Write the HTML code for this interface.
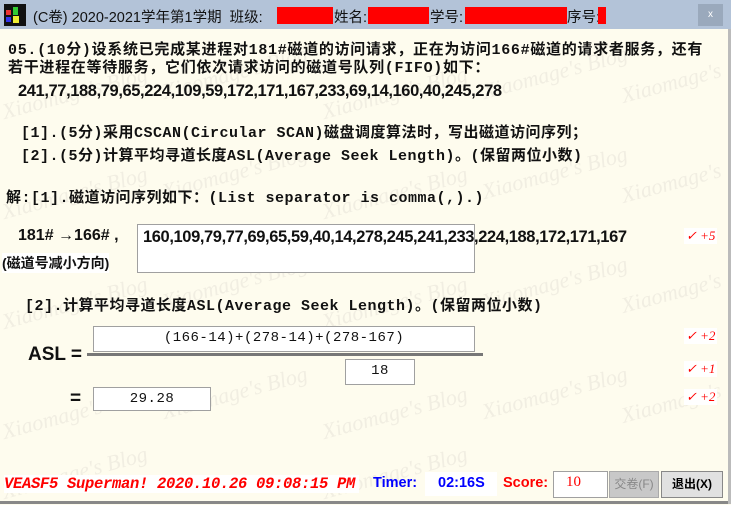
<!DOCTYPE html>
<html><head><meta charset="utf-8"><style>
*{margin:0;padding:0;box-sizing:border-box}
body{width:731px;height:504px;background:#fefcee;position:relative;overflow:hidden;font-family:"Liberation Mono","Noto Sans CJK SC",monospace}
.a{position:absolute;white-space:nowrap}
.t{font-size:15px;font-weight:bold;letter-spacing:0.5px;color:#111}
.ar{font-family:"Liberation Sans","Noto Sans CJK SC",sans-serif;font-weight:bold;color:#111}
.box{position:absolute;background:#fff;border:1px solid #a0a0a0}
.wm{position:absolute;font-family:"Liberation Serif",serif;font-style:italic;font-size:22px;color:#f1eee2;transform:rotate(-15deg);white-space:nowrap}
.mk{position:absolute;color:#f00;font-style:italic;font-size:13px;font-family:"Liberation Serif",serif;background:#fff;padding:0 2px}
.red{position:absolute;background:#f00;height:17px;top:7px}
.tt{position:absolute;top:6px;font-family:'Liberation Sans','Noto Sans CJK SC',sans-serif;font-size:14.5px;color:#111;white-space:nowrap}
</style></head><body>
<div class="wm" style="left:0;top:80px">Xiaomage's Blog</div>
<div class="wm" style="left:160px;top:60px">Xiaomage's Blog</div>
<div class="wm" style="left:320px;top:80px">Xiaomage's Blog</div>
<div class="wm" style="left:480px;top:60px">Xiaomage's Blog</div>
<div class="wm" style="left:620px;top:70px">Xiaomage's</div>
<div class="wm" style="left:0;top:180px">Xiaomage's Blog</div>
<div class="wm" style="left:160px;top:160px">Xiaomage's Blog</div>
<div class="wm" style="left:320px;top:180px">Xiaomage's Blog</div>
<div class="wm" style="left:480px;top:160px">Xiaomage's Blog</div>
<div class="wm" style="left:620px;top:170px">Xiaomage's</div>
<div class="wm" style="left:0;top:290px">Xiaomage's Blog</div>
<div class="wm" style="left:160px;top:270px">Xiaomage's Blog</div>
<div class="wm" style="left:320px;top:290px">Xiaomage's Blog</div>
<div class="wm" style="left:480px;top:270px">Xiaomage's Blog</div>
<div class="wm" style="left:620px;top:280px">Xiaomage's</div>
<div class="wm" style="left:0;top:400px">Xiaomage's Blog</div>
<div class="wm" style="left:160px;top:380px">Xiaomage's Blog</div>
<div class="wm" style="left:320px;top:400px">Xiaomage's Blog</div>
<div class="wm" style="left:480px;top:380px">Xiaomage's Blog</div>
<div class="wm" style="left:620px;top:390px">Xiaomage's</div>
<div class="wm" style="left:0;top:460px">Xiaomage's Blog</div>
<div class="wm" style="left:320px;top:460px">Xiaomage's Blog</div>

<div class="a" style="left:0;top:0;width:731px;height:29px;background:#b3c3d8"></div>
<div class="a" style="left:4px;top:4px;width:22px;height:22px;background:#111"></div>
<div class="a" style="left:6px;top:10px;width:5px;height:5px;background:#e33"></div>
<div class="a" style="left:6px;top:17px;width:5px;height:5px;background:#33e"></div>
<div class="a" style="left:13px;top:7px;width:5px;height:8px;background:#3c3"></div>
<div class="a" style="left:13px;top:16px;width:6px;height:7px;background:#ee3"></div>
<div class="tt" style="left:33px">(C卷) 2020-2021学年第1学期&nbsp;&nbsp;班级:</div>
<div class="tt" style="left:334px">姓名:</div>
<div class="tt" style="left:430px">学号:</div>
<div class="tt" style="left:567px">序号:</div>
<div class="red" style="left:277px;width:56px"></div>
<div class="red" style="left:368px;width:61px"></div>
<div class="red" style="left:465px;width:102px"></div>
<div class="red" style="left:598px;width:8px"></div>
<div class="a" style="left:698px;top:4px;width:25px;height:22px;background:#9aa9bc;color:#fff;font-size:10px;text-align:center;line-height:22px;font-family:'Liberation Sans'">x</div>

<div class="a t" style="left:8px;top:38px;letter-spacing:0.7px">05.(10分)设系统已完成某进程对181#磁道的访问请求，正在为访问166#磁道的请求者服务，还有</div>
<div class="a t" style="left:8px;top:56px;letter-spacing:0.7px">若干进程在等待服务，它们依次请求访问的磁道号队列(FIFO)如下：</div>
<div class="a ar" style="left:18px;top:82px;font-size:16.5px;letter-spacing:-0.4px">241,77,188,79,65,224,109,59,172,171,167,233,69,14,160,40,245,278</div>
<div class="a t" style="left:21px;top:121px">[1].(5分)采用CSCAN(Circular SCAN)磁盘调度算法时，写出磁道访问序列；</div>
<div class="a t" style="left:21px;top:144px">[2].(5分)计算平均寻道长度ASL(Average Seek Length)。(保留两位小数)</div>
<div class="a t" style="left:6px;top:186px">解:[1].磁道访问序列如下：(List separator is comma(,).)</div>

<div class="a ar" style="left:18px;top:227px;font-size:16px">181# →166# ,</div>
<div class="box" style="left:137px;top:224px;width:338px;height:49px"></div>
<div class="a ar" style="left:143px;top:228px;font-size:16.5px;letter-spacing:-0.4px">160,109,79,77,69,65,59,40,14,278,245,241,233,224,188,172,171,167</div>
<div class="a" style="left:2px;top:253px;background:#fff;font-size:14px;font-family:'Liberation Sans','Noto Sans CJK SC',sans-serif;font-weight:bold;color:#111">(磁道号减小方向)</div>
<div class="mk" style="left:684px;top:228px">✓ +5</div>

<div class="a t" style="left:25px;top:294px">[2].计算平均寻道长度ASL(Average Seek Length)。(保留两位小数)</div>
<div class="box" style="left:93px;top:326px;width:382px;height:26px"></div>
<div class="a t" style="left:93px;top:330px;width:382px;text-align:center;font-weight:normal;font-size:14px">(166-14)+(278-14)+(278-167)</div>
<div class="a" style="left:87px;top:353px;width:396px;height:3px;background:#777"></div>
<div class="a ar" style="left:28px;top:344px;font-size:19px">ASL =</div>
<div class="box" style="left:345px;top:359px;width:70px;height:26px"></div>
<div class="a t" style="left:345px;top:363px;width:70px;text-align:center;font-weight:normal;font-size:14px">18</div>
<div class="a ar" style="left:70px;top:388px;font-size:19px">=</div>
<div class="box" style="left:93px;top:387px;width:118px;height:24px"></div>
<div class="a t" style="left:93px;top:391px;width:118px;text-align:center;font-weight:normal;font-size:14px">29.28</div>
<div class="mk" style="left:684px;top:328px">✓ +2</div>
<div class="mk" style="left:684px;top:361px">✓ +1</div>
<div class="mk" style="left:684px;top:389px">✓ +2</div>

<div class="a" style="left:4px;top:475px;background:#fff;color:#f00;font-style:italic;font-weight:bold;font-size:15.5px;font-family:'Liberation Mono',monospace;padding-right:4px;letter-spacing:-0.3px">VEASF5 Superman! 2020.10.26 09:08:15 PM</div>
<div class="a ar" style="left:373px;top:475px;font-size:14.5px;color:#00f">Timer:</div>
<div class="a" style="left:425px;top:472px;width:72px;height:24px;background:#fff"></div>
<div class="a ar" style="left:438px;top:475px;font-size:14.5px;color:#00f">02:16S</div>
<div class="a ar" style="left:503px;top:475px;font-size:14.5px;color:#f00">Score:</div>
<div class="box" style="left:553px;top:471px;width:55px;height:27px"></div>
<div class="a" style="left:566px;top:474px;color:#f00;font-size:15px;font-family:'Liberation Serif',serif">10</div>
<div class="a" style="left:609px;top:471px;width:50px;height:27px;background:#c8c8c8;border:1px solid #aaa;color:#888;font-size:12px;text-align:center;line-height:25px;font-family:'Liberation Sans','Noto Sans CJK SC',sans-serif">交卷(F)</div>
<div class="a" style="left:661px;top:471px;width:62px;height:27px;background:#e1e1e1;border:1px solid #888;color:#000;font-size:12px;font-weight:bold;text-align:center;line-height:25px;font-family:'Liberation Sans','Noto Sans CJK SC',sans-serif">退出(X)</div>
<div class="a" style="left:0;top:501px;width:731px;height:3px;background:#888"></div>
<div class="a" style="left:728px;top:29px;width:3px;height:475px;background:#bbb"></div>
</body></html>
